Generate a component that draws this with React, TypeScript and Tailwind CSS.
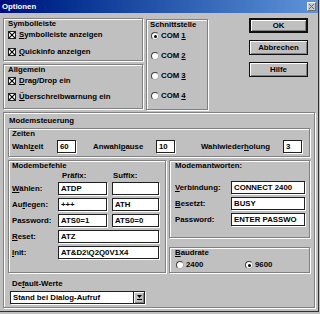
import React from "react";

const etched = "border border-[#808080] shadow-[inset_1px_1px_0_#fff,1px_1px_0_#fff]";

const Check = ({ children }: { children: React.ReactNode }) => (
  <div className="flex items-center gap-[3px] h-[11px]">
    <div className="w-[8px] h-[8px] bg-white border border-[#202020] flex items-center justify-center">
      <svg width="6" height="6" viewBox="0 0 6 6">
        <path d="M0 0L6 6M6 0L0 6" stroke="#000" strokeWidth="1.2" />
      </svg>
    </div>
    <span>{children}</span>
  </div>
);

const Radio = ({ on, children }: { on?: boolean; children: React.ReactNode }) => (
  <div className="flex items-center gap-[2px]">
    <div className="w-[8px] h-[8px] rounded-full bg-white border border-t-[#404040] border-l-[#404040] border-r-[#b0b0b0] border-b-[#b0b0b0] flex items-center justify-center">
      {on && <div className="w-[3px] h-[3px] rounded-full bg-black" />}
    </div>
    <span>{children}</span>
  </div>
);

const Field = ({ w, children }: { w: string; children?: React.ReactNode }) => (
  <div
    className={`${w} h-[13px] shrink-0 bg-white border border-[#202020] shadow-[1px_1px_0_#fff] pl-[2px] leading-[11px] whitespace-nowrap overflow-hidden`}
  >
    {children}
  </div>
);

const Btn = ({ children, def }: { children: React.ReactNode; def?: boolean }) => (
  <div
    className={`h-[15px] flex items-center justify-center bg-[#c0c0c0] border-[#101010] shadow-[inset_1px_1px_0_#fff,inset_-1px_-1px_0_#808080] ${
      def ? "border-2" : "border"
    }`}
  >
    {children}
  </div>
);

export default function App() {
  return (
    <div className="w-[320px] h-[314px] bg-[#c0c0c0] overflow-hidden font-['Liberation_Sans',Arial,sans-serif] font-bold text-[7.8px] leading-[10px] text-black">
      <div className="w-[319px] h-[312px] border-r border-b border-[#303030] flex flex-col">
        {/* title bar */}
        <div className="h-[13px] shrink-0 flex items-center justify-between pl-[2px] pr-[2px] bg-linear-to-r from-[#000a7c] to-[#6094d8] text-white">
          <span>Optionen</span>
          <div className="w-[9px] h-[9px] bg-[#c8c8c8] border border-[#f0f0f0] border-r-[#707070] border-b-[#707070] flex items-center justify-center">
            <svg width="5" height="5" viewBox="0 0 5 5">
              <path d="M0 0L5 5M5 0L0 5" stroke="#8a5a6a" strokeWidth="1" />
            </svg>
          </div>
        </div>

        {/* top section */}
        <div className="flex items-start pl-[3px] pt-[5px]">
          <div className="w-[140px] flex flex-col gap-[3px]">
            <div className={`${etched} h-[43px] pl-[4px]`}>
              <div>Symbolleiste</div>
              <Check>
                <u>S</u>ymbolleiste anzeigen
              </Check>
              <div className="mt-[6px]">
                <Check>
                  <u>Q</u>uickinfo anzeigen
                </Check>
              </div>
            </div>
            <div className={`${etched} h-[45px] pl-[4px]`}>
              <div>Allgemein</div>
              <Check>
                <u>D</u>rag/Drop ein
              </Check>
              <div className="mt-[5px]">
                <Check>
                  <u>Ü</u>berschreibwarnung ein
                </Check>
              </div>
            </div>
          </div>

          <div className={`${etched} ml-[3px] mt-[1px] w-[62px] h-[91px] pl-[3px]`}>
            <div>Schnittstelle</div>
            <div className="ml-[1px] flex flex-col gap-[8px]">
              {["1", "2", "3", "4"].map((n, i) => (
                <div key={n} className="h-[12px] flex items-center">
                  <Radio on={i === 0}>
                    COM <u>{n}</u>
                  </Radio>
                </div>
              ))}
            </div>
          </div>

          <div className="ml-[41px] w-[59px] flex flex-col gap-[7px]">
            <Btn def>OK</Btn>
            <Btn>Abbrechen</Btn>
            <Btn>Hilfe</Btn>
          </div>
        </div>

        {/* Modemsteuerung */}
        <div className={`${etched} ml-[3px] mt-[2px] w-[312px] h-[196px] pt-[3px] pl-[4px]`}>
          <div className="pl-[1px]">Modemsteuerung</div>

          <div className={`${etched} mt-[2px] w-[302px] h-[29px] pl-[3px]`}>
            <div>Zeiten</div>
            <div className="mt-[1px] flex items-center h-[13px]">
              <span className="w-[45px]">
                Wahl<u>z</u>eit
              </span>
              <Field w="w-[19px]">60</Field>
              <span className="ml-[17px] w-[63px]">
                Anwahl<u>p</u>ause
              </span>
              <Field w="w-[19px]">10</Field>
              <span className="ml-[26px] w-[82px]">
                Wahlwieder<u>h</u>olung
              </span>
              <Field w="w-[19px]">3</Field>
            </div>
          </div>

          <div className="mt-[3px] flex gap-[3px]">
            <div className={`${etched} w-[158px] h-[113px] pl-[3px]`}>
              <div>Modembefehle</div>
              <div className="flex">
                <span className="ml-[50px] w-[51px]">Präfix:</span>
                <span>Suffix:</span>
              </div>
              <div className="mt-[1px] flex flex-col gap-[3px]">
                <div className="flex items-center">
                  <span className="w-[46px]">
                    <u>W</u>ählen:
                  </span>
                  <Field w="w-[49px]">ATDP</Field>
                  <div className="ml-[5px]">
                    <Field w="w-[47px]" />
                  </div>
                </div>
                <div className="flex items-center">
                  <span className="w-[46px]">
                    Au<u>f</u>legen:
                  </span>
                  <Field w="w-[49px]">+++</Field>
                  <div className="ml-[5px]">
                    <Field w="w-[47px]">ATH</Field>
                  </div>
                </div>
                <div className="flex items-center">
                  <span className="w-[46px]">Password:</span>
                  <Field w="w-[49px]">ATS0=1</Field>
                  <div className="ml-[5px]">
                    <Field w="w-[47px]">ATS0=0</Field>
                  </div>
                </div>
                <div className="flex items-center">
                  <span className="w-[46px]">
                    <u>R</u>eset:
                  </span>
                  <Field w="w-[101px]">ATZ</Field>
                </div>
                <div className="flex items-center">
                  <span className="w-[46px]">
                    <u>I</u>nit:
                  </span>
                  <Field w="w-[101px]">AT&amp;D2\Q2Q0V1X4</Field>
                </div>
              </div>
            </div>

            <div className="w-[141px] flex flex-col">
              <div className={`${etched} h-[78px] pl-[5px]`}>
                <div>Modemantworten:</div>
                <div className="mt-[10px] flex flex-col gap-[3px]">
                  <div className="flex items-center">
                    <span className="w-[56px]">
                      <u>V</u>erbindung:
                    </span>
                    <Field w="w-[74px]">CONNECT 2400</Field>
                  </div>
                  <div className="flex items-center">
                    <span className="w-[56px]">
                      <u>B</u>esetzt:
                    </span>
                    <Field w="w-[74px]">BUSY</Field>
                  </div>
                  <div className="flex items-center">
                    <span className="w-[56px]">Password:</span>
                    <Field w="w-[74px]">ENTER PASSWO</Field>
                  </div>
                </div>
              </div>
              <div className={`${etched} mt-[9px] h-[26px] pl-[5px]`}>
                <div>
                  <u>B</u>audrate
                </div>
                <div className="mt-[2px] flex items-center h-[10px] pl-[1px]">
                  <div className="w-[69px]">
                    <Radio>2400</Radio>
                  </div>
                  <Radio on>9600</Radio>
                </div>
              </div>
            </div>
          </div>

          <div className="mt-[6px] pl-[4px]">
            De<u>f</u>ault-Werte
          </div>
          <div className="mt-[2px] ml-[2px] w-[135px] h-[13px] flex bg-white border border-[#202020] shadow-[1px_1px_0_#fff]">
            <div className="flex-1 pl-[2px] leading-[11px]">Stand bei Dialog-Aufruf</div>
            <div className="w-[11px] h-full bg-[#c0c0c0] border-l border-[#202020] shadow-[inset_1px_1px_0_#fff,inset_-1px_-1px_0_#808080] flex flex-col items-center justify-center gap-[1px]">
              <svg width="5" height="3" viewBox="0 0 5 3">
                <path d="M0 0H5L2.5 3Z" fill="#000" />
              </svg>
              <div className="w-[5px] h-[1px] bg-black" />
            </div>
          </div>
        </div>
      </div>
    </div>
  );
}
